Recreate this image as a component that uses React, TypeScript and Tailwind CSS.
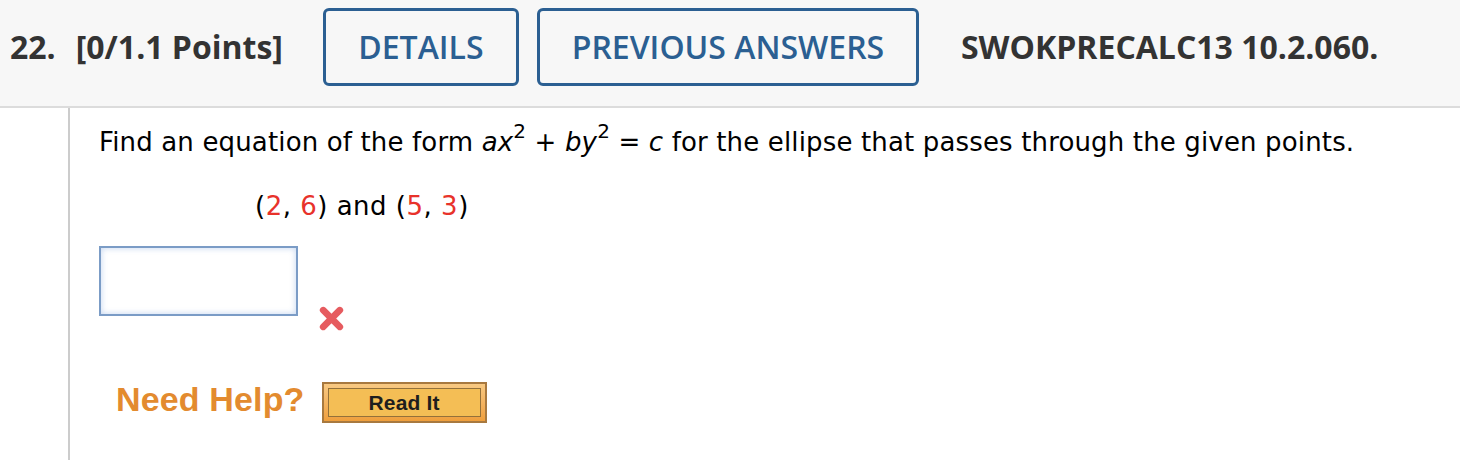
import React from 'react';

function ReadItButton() {
  return (
    <button className="ml-[17px] mt-[6px] flex h-[41px] w-[165px] items-center justify-center border-2 border-[#a8793f] bg-gradient-to-b from-[#f8c982] to-[#ef9f3c] p-[4px]">
      <span className="flex h-full w-full items-center justify-center border border-[#94713a] bg-[#f4be55] font-['Liberation_Sans',Arial,sans-serif] text-[21px] font-bold leading-none text-[#1e1e1e]">
        Read It
      </span>
    </button>
  );
}

function WrongMark() {
  return (
    <svg width="29" height="29" viewBox="0 0 28 28" className="ml-[19px] mb-[-17px]">
      <path d="M6 6 L22 22 M22 6 L6 22" stroke="#e65b5f" strokeWidth="6.5" strokeLinecap="round" />
    </svg>
  );
}

export default function App() {
  return (
    <div className="h-[460px] w-[1460px] overflow-hidden bg-white">
      {/* Question header */}
      <header className="flex h-[108px] items-start border-b-2 border-[#dcdcdc] bg-[#f7f7f7] pl-[10px] pt-[8px] font-['Open_Sans',sans-serif] text-[#333333]">
        <div className="flex h-[78px] items-center">
          <span className="text-[32px] font-bold">22.</span>
          <span className="ml-[20px] text-[32px] font-bold">[0/1.1 Points]</span>
        </div>
        <button className="ml-[40px] flex h-[78px] w-[196px] items-center justify-center rounded-[6px] border-[3px] border-[#2b5f92] text-[32px] font-semibold text-[#2b5f92]">
          DETAILS
        </button>
        <button className="ml-[18px] flex h-[78px] w-[382px] items-center justify-center rounded-[6px] border-[3px] border-[#2b5f92] text-[32px] font-semibold text-[#2b5f92]">
          PREVIOUS ANSWERS
        </button>
        <div className="ml-[42px] flex h-[78px] items-center">
          <span className="text-[32px] font-bold">SWOKPRECALC13 10.2.060.</span>
        </div>
      </header>

      {/* Question body */}
      <div className="ml-[68px] h-[352px] border-l-2 border-[#cccccc] pl-[29px] pt-[17px] font-['DejaVu_Sans',Verdana,sans-serif] text-[26px] tracking-[0.15px] text-black">
        <p className="leading-[34px]">
          Find an equation of the form <i>ax</i><sup className="top-[-13px] text-[20px]">2</sup> + <i>by</i>
          <sup className="top-[-13px] text-[20px]">2</sup> = <i>c</i> for the ellipse that passes through the given points.
        </p>
        <p className="ml-[156px] mt-[30px] leading-[34px] tracking-[0.5px]">
          (<span className="text-[#e8322a]">2</span>, <span className="text-[#e8322a]">6</span>) and (
          <span className="text-[#e8322a]">5</span>, <span className="text-[#e8322a]">3</span>)
        </p>

        <div className="mt-[23px] flex items-end">
          <input
            type="text"
            className="h-[70px] w-[199px] border-2 border-[#7b9cc6] bg-white shadow-[inset_0_0_6px_rgba(120,160,220,0.45)] outline-none"
          />
          <WrongMark />
        </div>

        <div className="mt-[58px] flex items-center pl-[17px]">
          <span className="font-['Liberation_Sans',Arial,sans-serif] text-[34px] font-bold text-[#e38b2f]">Need Help?</span>
          <ReadItButton />
        </div>
      </div>
    </div>
  );
}
